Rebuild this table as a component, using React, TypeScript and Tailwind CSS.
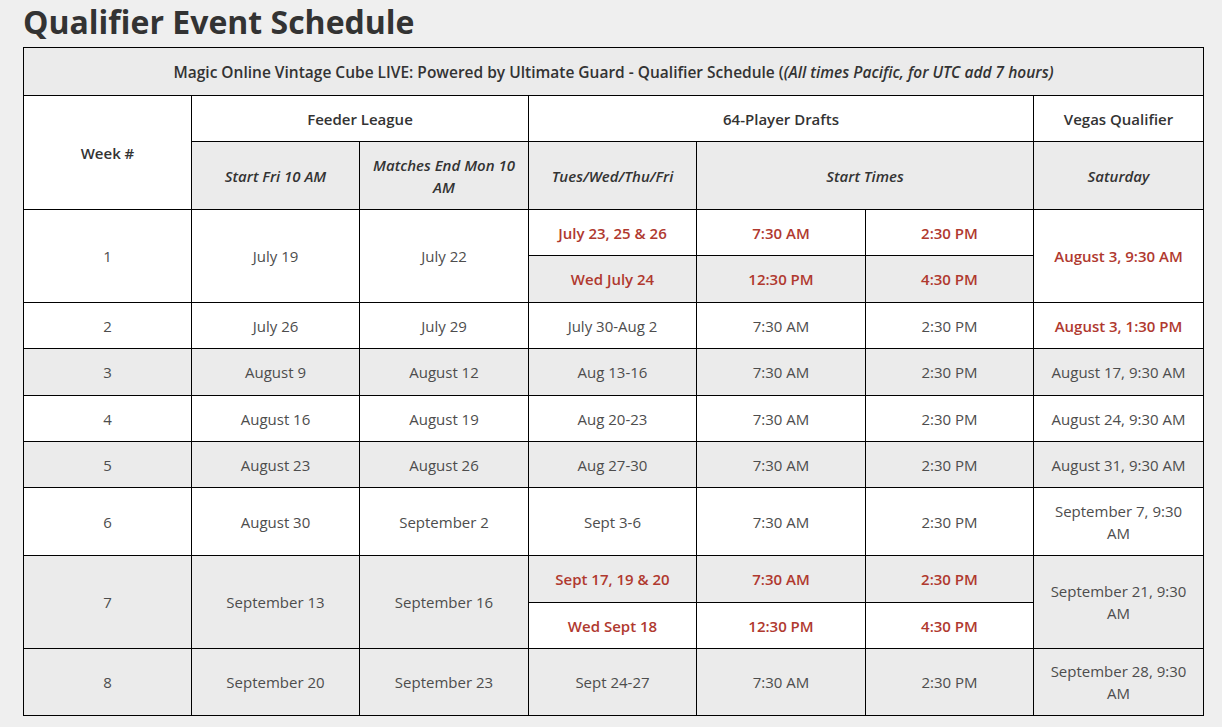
import React from 'react';

// Qualifier schedule table - recreated from screenshot

type Row = {
  week: string;
  start: string;
  end: string;
  draftDays: string;
  t1: string;
  t2: string;
  vegas: string;
  vegasRed?: boolean;
  shaded: boolean;
  h: string;
};

const rows: Row[] = [
  { week: '2', start: 'July 26', end: 'July 29', draftDays: 'July 30-Aug 2', t1: '7:30 AM', t2: '2:30 PM', vegas: 'August 3, 1:30 PM', vegasRed: true, shaded: false, h: 'h-[46px]' },
  { week: '3', start: 'August 9', end: 'August 12', draftDays: 'Aug 13-16', t1: '7:30 AM', t2: '2:30 PM', vegas: 'August 17, 9:30 AM', shaded: true, h: 'h-[47px]' },
  { week: '4', start: 'August 16', end: 'August 19', draftDays: 'Aug 20-23', t1: '7:30 AM', t2: '2:30 PM', vegas: 'August 24, 9:30 AM', shaded: false, h: 'h-[46px]' },
  { week: '5', start: 'August 23', end: 'August 26', draftDays: 'Aug 27-30', t1: '7:30 AM', t2: '2:30 PM', vegas: 'August 31, 9:30 AM', shaded: true, h: 'h-[46px]' },
  { week: '6', start: 'August 30', end: 'September 2', draftDays: 'Sept 3-6', t1: '7:30 AM', t2: '2:30 PM', vegas: 'September 7, 9:30 AM', shaded: false, h: 'h-[68px]' },
];

const cell = 'border border-black text-center align-middle px-3';
const head = 'border border-black text-center align-middle px-3 font-semibold text-[#333333]';
const red = 'text-[#b0392f] font-semibold';

export default function App() {
  return (
    <div className="min-h-[727px] bg-[#efefef] px-[23px] pb-4 text-[#4d4d4d]" style={{ fontFamily: '"Open Sans", "Liberation Sans", sans-serif' }}>
      <h1 className="text-[32px] font-bold leading-[44px] text-[#333333]">Qualifier Event Schedule</h1>

      <table className="w-[1180px] table-fixed border-collapse text-[15px] leading-[22px] mt-[3px]">
        <colgroup>
          <col className="w-[168px]" />
          <col className="w-[168px]" />
          <col className="w-[169px]" />
          <col className="w-[168px]" />
          <col className="w-[169px]" />
          <col className="w-[168px]" />
          <col className="w-[170px]" />
        </colgroup>
        <thead>
          <tr className="h-[48px] bg-[#ebebeb]">
            <th colSpan={7} className={`${head} text-[15.5px]`}>
              Magic Online Vintage Cube LIVE: Powered by Ultimate Guard - Qualifier Schedule (<i>(All times Pacific, for UTC add 7 hours)</i>
            </th>
          </tr>
          <tr className="h-[46px] bg-white">
            <th rowSpan={2} className={head}>Week #</th>
            <th colSpan={2} className={head}>Feeder League</th>
            <th colSpan={3} className={head}>64-Player Drafts</th>
            <th className={head}>Vegas Qualifier</th>
          </tr>
          <tr className="h-[68px] bg-[#ebebeb]">
            <th className={`${head} italic`}>Start Fri 10 AM</th>
            <th className={`${head} italic`}>Matches End Mon 10 AM</th>
            <th className={`${head} italic`}>Tues/Wed/Thu/Fri</th>
            <th colSpan={2} className={`${head} italic`}>Start Times</th>
            <th className={`${head} italic`}>Saturday</th>
          </tr>
        </thead>
        <tbody>
          <tr className="h-[46px] bg-white">
            <td rowSpan={2} className={`${cell} bg-white`}>1</td>
            <td rowSpan={2} className={`${cell} bg-white`}>July 19</td>
            <td rowSpan={2} className={`${cell} bg-white`}>July 22</td>
            <td className={`${cell} ${red}`}>July 23, 25 &amp; 26</td>
            <td className={`${cell} ${red}`}>7:30 AM</td>
            <td className={`${cell} ${red}`}>2:30 PM</td>
            <td rowSpan={2} className={`${cell} ${red} bg-white`}>August 3, 9:30 AM</td>
          </tr>
          <tr className="h-[47px] bg-[#ebebeb]">
            <td className={`${cell} ${red}`}>Wed July 24</td>
            <td className={`${cell} ${red}`}>12:30 PM</td>
            <td className={`${cell} ${red}`}>4:30 PM</td>
          </tr>

          {rows.map((r) => (
            <tr key={r.week} className={`${r.h} ${r.shaded ? 'bg-[#ebebeb]' : 'bg-white'}`}>
              <td className={cell}>{r.week}</td>
              <td className={cell}>{r.start}</td>
              <td className={cell}>{r.end}</td>
              <td className={cell}>{r.draftDays}</td>
              <td className={cell}>{r.t1}</td>
              <td className={cell}>{r.t2}</td>
              <td className={`${cell} ${r.vegasRed ? red : ''}`}>{r.vegas}</td>
            </tr>
          ))}

          <tr className="h-[47px] bg-[#ebebeb]">
            <td rowSpan={2} className={`${cell} bg-[#ebebeb]`}>7</td>
            <td rowSpan={2} className={`${cell} bg-[#ebebeb]`}>September 13</td>
            <td rowSpan={2} className={`${cell} bg-[#ebebeb]`}>September 16</td>
            <td className={`${cell} ${red}`}>Sept 17, 19 &amp; 20</td>
            <td className={`${cell} ${red}`}>7:30 AM</td>
            <td className={`${cell} ${red}`}>2:30 PM</td>
            <td rowSpan={2} className={`${cell} bg-[#ebebeb]`}>September 21, 9:30 AM</td>
          </tr>
          <tr className="h-[46px] bg-white">
            <td className={`${cell} ${red}`}>Wed Sept 18</td>
            <td className={`${cell} ${red}`}>12:30 PM</td>
            <td className={`${cell} ${red}`}>4:30 PM</td>
          </tr>

          <tr className="h-[67px] bg-[#ebebeb]">
            <td className={cell}>8</td>
            <td className={cell}>September 20</td>
            <td className={cell}>September 23</td>
            <td className={cell}>Sept 24-27</td>
            <td className={cell}>7:30 AM</td>
            <td className={cell}>2:30 PM</td>
            <td className={cell}>September 28, 9:30 AM</td>
          </tr>
        </tbody>
      </table>
    </div>
  );
}
